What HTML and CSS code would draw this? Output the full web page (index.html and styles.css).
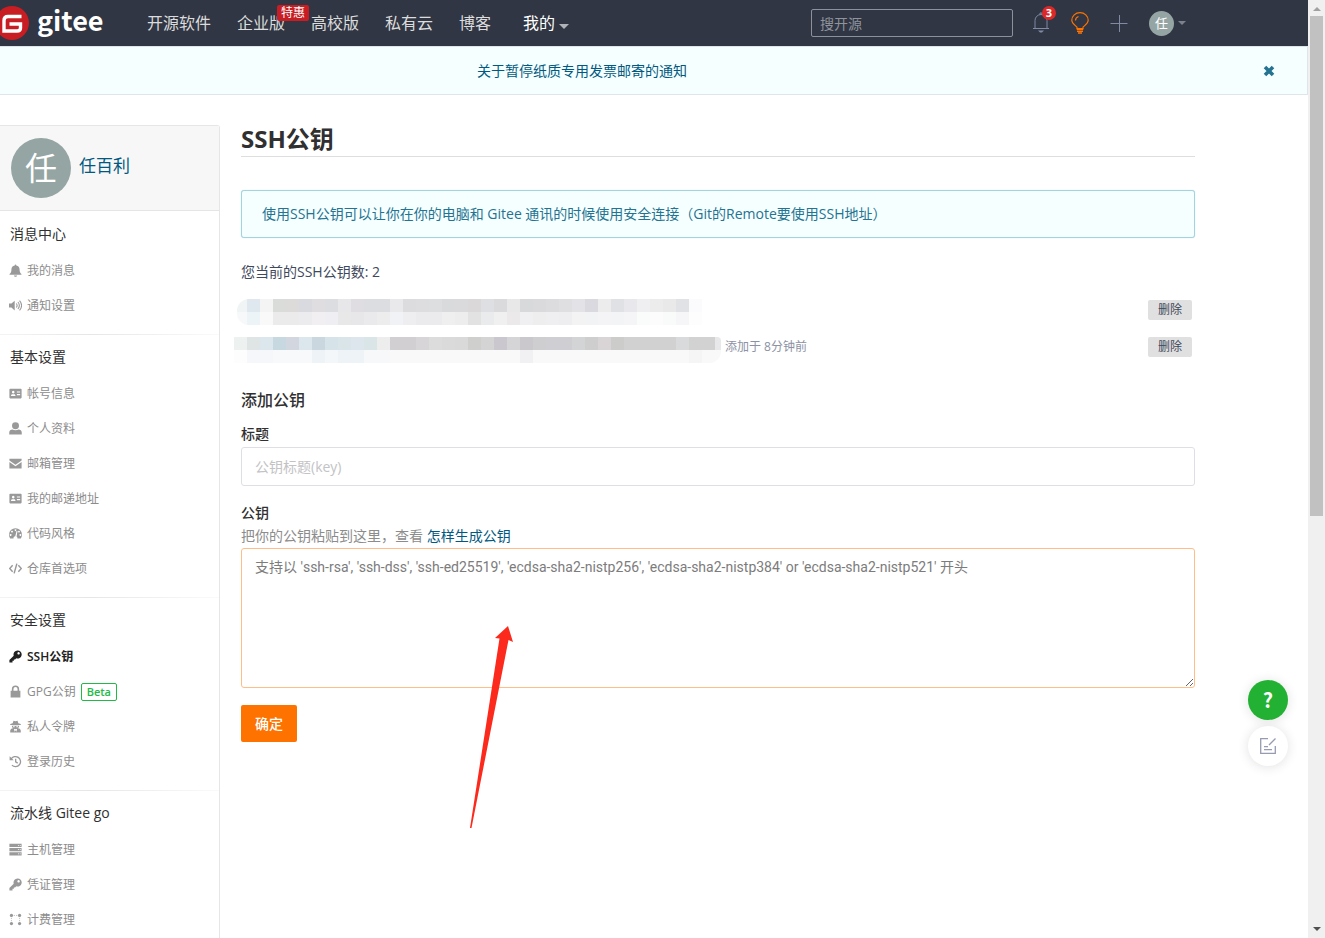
FILE: index.html
```html
<!DOCTYPE html>
<html lang="zh-CN">
<head>
<meta charset="utf-8">
<title>SSH公钥 - Gitee</title>
<link rel="stylesheet" href="styles.css">
</head>
<body>
<svg class="sprite" aria-hidden="true">
  <symbol id="i-bell" viewBox="0 0 16 16"><path d="M8 .7c.6 0 1 .4 1 1 2.500.5 4 2.300 4 4.800 0 3 .8 4.700 2.300 5.700v1H.7v-1C2.200 11.200 3 9.500 3 6.500c0-2.500 1.500-4.300 4-4.800 0-.6.400-1 1-1zM6 14h4c-.2.900-1 1.700-2 1.700S6.200 14.900 6 14z"/></symbol>
  <symbol id="i-sound" viewBox="0 0 16 16"><path d="M0 5.500h3L7 2v12l-4-3.500H0z"/><path d="M9 5.500q2 2.500 0 5M11 3.700q3.500 4.300 0 8.600M13 2q5 6 0 12" fill="none" stroke="currentColor" stroke-width="1.300"/></symbol>
  <symbol id="i-card" viewBox="0 0 16 16"><path fill-rule="evenodd" d="M1.500 2h13q1 0 1 1v10q0 1-1 1h-13q-1 0-1-1V3q0-1 1-1zM5.200 4.700a1.600 1.600 0 1 0 .01 0zM2.500 11h5.500c0-1.700-.8-2.200-1.500-2.200h-2.500c-.8 0-1.500.6-1.500 2.200zM9.700 5.500v1.300h4v-1.300zM9.700 8.700v1.300h4v-1.300z"/></symbol>
  <symbol id="i-user" viewBox="0 0 16 16"><circle cx="8" cy="4.600" r="4.300"/><path d="M.3 15.500v-2.500c0-2.200 1.700-3.700 4-3.700 2 1.200 5.400 1.200 7.400 0 2.300 0 4 1.500 4 3.700v2.500z"/></symbol>
  <symbol id="i-mail" viewBox="0 0 16 16"><path d="M.5 2.200h15v2L8 9.500.5 4.200zM.5 6 8 11.400 15.500 6v8H.5z"/></symbol>
  <symbol id="i-gauge" viewBox="0 0 16 16"><path fill-rule="evenodd" d="M1.500 14A8 8 0 0 1 0 9.500a8 8 0 0 1 16 0A8 8 0 0 1 14.500 14h-4c0-1.200-.5-2-1.200-2.400L10.500 5h-1.200L7.700 11.300c-1.200.1-2.200 1-2.200 2.700zM8 2.700a1.100 1.100 0 1 0 .01 0zM3.700 4.500a1.100 1.100 0 1 0 .01 0zM2 8.700a1.100 1.100 0 1 0 .01 0zM12.300 4.500a1.100 1.100 0 1 0 .01 0zM14 8.700a1.100 1.100 0 1 0 .01 0z"/></symbol>
  <symbol id="i-code" viewBox="0 0 16 16"><path d="M4.500 4 .8 8l3.700 4M11.500 4 15.200 8l-3.700 4M9.700 2 6.300 14" fill="none" stroke="currentColor" stroke-width="1.800"/></symbol>
  <symbol id="i-key" viewBox="0 0 16 16"><path fill-rule="evenodd" d="M10.500.5a5 5 0 1 1-1.600 9.700L7.500 11.600H6v1.700H4.300V15.500H.5v-3.300L5.800 7A5 5 0 0 1 10.500.5zM11.800 2.600a1.500 1.500 0 1 0 .01 0z"/></symbol>
  <symbol id="i-lock" viewBox="0 0 16 16"><path fill-rule="evenodd" d="M2 7h1.500V5a4.500 4.500 0 0 1 9 0v2H14v8.500H2zM5.500 7h5V5a2.500 2.500 0 0 0-5 0z"/></symbol>
  <symbol id="i-spy" viewBox="0 0 16 16"><path fill-rule="evenodd" d="M4.500 4 5.500.8 8 1.500l2.500-.7 1 3.200 3 1v1h-13V5zM3.500 7h9c0 1.500-.7 2.500-1.500 3 2.500.3 3.500 1.500 3.500 3.500v2h-13v-2c0-2 1-3.200 3.500-3.500-.8-.5-1.500-1.500-1.500-3zM5 7.600v1.200h2V7.600zM9 7.600v1.200h2V7.600zM6 10.700l1 3.800 1-2 1 2 1-3.800-2 .8z"/></symbol>
  <symbol id="i-history" viewBox="0 0 16 16"><path d="M2.500 5.200A6.200 6.200 0 1 1 3.600 12.500M8.200 4.500v4l2.500 1.500" fill="none" stroke="currentColor" stroke-width="1.600"/><path d="M.8 1.500v5h5z"/></symbol>
  <symbol id="i-server" viewBox="0 0 16 16"><path fill-rule="evenodd" d="M.5 1h15v4H.5zM.5 6.200h15v4H.5zM.5 11.400h15v4H.5zM11 2.500v1h1.300v-1zM13.200 2.500v1h1.300v-1zM11 7.700v1h1.300v-1zM13.200 7.700v1h1.300v-1zM11 12.900v1h1.300v-1zM13.200 12.900v1h1.300v-1z"/></symbol>
  <symbol id="i-nodes" viewBox="0 0 16 16"><circle cx="3" cy="3" r="2"/><circle cx="13" cy="3" r="2"/><circle cx="3" cy="13" r="2"/><circle cx="13" cy="13" r="2"/><path d="M3 3v10M13 3v10M3 3h10" fill="none" stroke="currentColor" stroke-width="1" stroke-dasharray="1 2"/></symbol>
</svg>

<div class="viewport">
  <div class="page">
    <header class="topbar">
      <a class="logo" href="#">
        <svg viewBox="0 0 30 36" class="logo-mark" aria-hidden="true"><circle cx="12" cy="18" r="17" fill="#c71d23"/><path d="M21.500 11.500H8q-4 0-4 4v10.500h13q3.500 0 3.500-3v-4H9.500" fill="none" stroke="#fff" stroke-width="3.400"/></svg>
        <span class="logo-text">gitee</span>
      </a>
      <nav class="nav">
        <a href="#">开源软件</a>
        <a href="#" class="has-tag">企业版<span class="tag">特惠</span></a>
        <a href="#">高校版</a>
        <a href="#">私有云</a>
        <a href="#">博客</a>
        <a href="#" class="mine">我的<span class="caret"></span></a>
      </nav>
      <input class="search" type="text" placeholder="搜开源" aria-label="搜开源">
      <div class="tools">
        <a href="#" class="tool" aria-label="通知">
          <svg viewBox="0 0 18 22" width="18" height="22" fill="none" stroke="#7f8aa5" stroke-width="1"><path d="M1 16.500h16M3 16.500V8.500a6 6 0 0 1 12 0v8M8 2.500V1h2v1.500"/><path d="M6 18.500h6l-2 2H8z" fill="#7f8aa5" stroke="none"/></svg>
          <span class="count">3</span>
        </a>
        <a href="#" class="tool" aria-label="动态">
          <svg viewBox="0 0 18 22" width="18" height="22" fill="none" stroke="#fe7300" stroke-width="1.200"><path d="M6 16.500v-1.300C3 12.500.8 11 .8 8.300a8.200 7.700 0 0 1 16.400 0c0 2.700-2.200 4.200-5.200 6.900v1.300zM4.500 8.500q0-3 3-4"/><path d="M5.700 17.200h6.600M6 19.200h6M7 21h4" stroke-width="1.400"/></svg>
        </a>
        <a href="#" class="tool" aria-label="新建">
          <svg viewBox="0 0 18 22" width="18" height="22" stroke="#7f8aa5"><path d="M.5 11.500h17M9.500 3v17"/></svg>
        </a>
        <a href="#" class="me"><span class="avatar small">任</span><span class="caret dim"></span></a>
      </div>
    </header>

    <div class="notice">
      <a href="#">关于暂停纸质专用发票邮寄的通知</a>
      <button type="button" class="close" aria-label="关闭"><svg viewBox="0 0 12 12" width="12" height="12"><path d="M2 2l8 8M10 2l-8 8" stroke="#237391" stroke-width="3.600"/></svg></button>
    </div>

    <div class="columns">
      <aside class="side">
        <div class="profile"><span class="avatar">任</span><a href="#">任百利</a></div>
        <section>
          <h2>消息中心</h2>
          <a href="#"><svg><use href="#i-bell"/></svg>我的消息</a>
          <a href="#"><svg><use href="#i-sound"/></svg>通知设置</a>
        </section>
        <section>
          <h2>基本设置</h2>
          <a href="#"><svg><use href="#i-card"/></svg>帐号信息</a>
          <a href="#"><svg><use href="#i-user"/></svg>个人资料</a>
          <a href="#"><svg><use href="#i-mail"/></svg>邮箱管理</a>
          <a href="#"><svg><use href="#i-card"/></svg>我的邮递地址</a>
          <a href="#"><svg><use href="#i-gauge"/></svg>代码风格</a>
          <a href="#"><svg><use href="#i-code"/></svg>仓库首选项</a>
        </section>
        <section>
          <h2>安全设置</h2>
          <a href="#" class="active"><svg><use href="#i-key"/></svg>SSH公钥</a>
          <a href="#"><svg><use href="#i-lock"/></svg>GPG公钥<span class="beta">Beta</span></a>
          <a href="#"><svg><use href="#i-spy"/></svg>私人令牌</a>
          <a href="#"><svg><use href="#i-history"/></svg>登录历史</a>
        </section>
        <section>
          <h2>流水线 Gitee go</h2>
          <a href="#"><svg><use href="#i-server"/></svg>主机管理</a>
          <a href="#"><svg><use href="#i-key"/></svg>凭证管理</a>
          <a href="#"><svg><use href="#i-nodes"/></svg>计费管理</a>
        </section>
      </aside>

      <main class="main">
        <h1>SSH公钥</h1>
        <p class="info">使用SSH公钥可以让你在你的电脑和 Gitee 通讯的时候使用安全连接（Git的Remote要使用SSH地址）</p>
        <p class="total">您当前的SSH公钥数: 2</p>
        <ul class="keys">
          <li><span class="mosaic first"></span><button type="button">删除</button></li>
          <li><span class="mosaic second"></span><span class="when">添加于 8分钟前</span><button type="button">删除</button></li>
        </ul>
        <form class="form">
          <h3>添加公钥</h3>
          <label for="title">标题</label>
          <input id="title" type="text" placeholder="公钥标题(key)">
          <label for="key">公钥</label>
          <p class="help">把你的公钥粘贴到这里，查看 <a href="#">怎样生成公钥</a></p>
          <textarea id="key" placeholder="支持以 'ssh-rsa', 'ssh-dss', 'ssh-ed25519', 'ecdsa-sha2-nistp256', 'ecdsa-sha2-nistp384' or 'ecdsa-sha2-nistp521' 开头"></textarea>
          <button type="submit">确定</button>
        </form>
        <svg class="arrow" viewBox="0 0 46 204" width="46" height="204" aria-hidden="true"><path d="M39 1 44 17 39.500 15 2.500 203H1L30.500 13.500 26 13z" fill="#fc2a1c"/></svg>
      </main>
    </div>

    <div class="float">
      <button type="button" class="ask" aria-label="帮助">?</button>
      <button type="button" class="feedback" aria-label="反馈"><svg viewBox="0 0 16 16" width="16" height="16" fill="none" stroke="#979bb0" stroke-width="1.300"><path d="M8 .7H.7v14.600h14.600V8M15.500.5 9 7M4 8.700h4M4 11.700h8"/></svg></button>
    </div>
  </div>

  <div class="scrollbar" aria-hidden="true"><span class="up"></span><span class="thumb"></span><span class="down"></span></div>
</div>
</body>
</html>
```

FILE: styles.css
```css
* { box-sizing: border-box; }
body {
  margin: 0;
  background: #fff;
  color: #40485b;
  font: 14px/20px "Open Sans", "Noto Sans CJK SC", sans-serif;
}
a { color: #005980; text-decoration: none; }
h1, h2, h3, p, ul { margin: 0; padding: 0; font-weight: 400; }
button, input, textarea { font: inherit; }
.sprite { display: none; }

.viewport { display: grid; grid-template-columns: 1fr 17px; height: 100vh; overflow: hidden; }
.page { position: relative; min-width: 0; overflow: hidden; display: flex; flex-direction: column; }

/* top bar */
.topbar {
  display: flex;
  flex: none;
  align-items: center;
  height: 46px;
  padding-right: 122px;
  background: #303643;
}
.logo { display: flex; align-items: center; width: 147px; gap: 7px; color: #fff; }
.logo-mark { width: 30px; height: 36px; }
.logo-text { font: 700 27px/32px "Noto Sans CJK SC", sans-serif; padding-bottom: 6px; }
.nav { display: flex; gap: 26px; font-size: 16px; }
.nav a { color: #dcdcdc; white-space: nowrap; }
.nav .has-tag { position: relative; }
.nav .mine { color: #fff; margin-left: 6px; }
.tag {
  position: absolute;
  left: 40px;
  top: -8px;
  padding: 0 4px;
  border-radius: 2px;
  background: #c71d23;
  color: #fff;
  font-size: 12px;
  line-height: 16px;
}
.caret {
  display: inline-block;
  margin-left: 4px;
  border: 5px solid transparent;
  border-top-color: #b0b3ba;
  border-bottom: 0;
}
.caret.dim { border-width: 4px 4px 0; border-top-color: #7c818c; }
.search {
  width: 202px;
  height: 28px;
  margin-left: auto;
  padding: 0 8px;
  border: 1px solid #8c919c;
  border-radius: 2px;
  background: transparent;
  color: #fff;
}
.search::placeholder { color: #8f939c; }
.tools { display: flex; align-items: center; gap: 21px; margin-left: 19px; }
.tool { position: relative; height: 22px; }
.tool svg { display: block; }
.count {
  position: absolute;
  left: 10px;
  top: -6px;
  width: 14px;
  height: 14px;
  border-radius: 50%;
  background: #db2828;
  color: #fff;
  font-size: 11px;
  font-weight: 700;
  line-height: 14px;
  text-align: center;
}
.me { display: flex; align-items: center; }
.avatar {
  display: grid;
  place-items: center;
  width: 60px;
  height: 60px;
  border-radius: 50%;
  background: #95a5a4;
  color: #fff;
  font-size: 32px;
  line-height: 40px;
}
.avatar.small { width: 25px; height: 25px; font-size: 13px; line-height: 20px; }

/* notice strip */
.notice {
  display: flex;
  flex: none;
  align-items: center;
  gap: 99px;
  height: 49px;
  padding-right: 32px;
  border: 1px solid #dfe6ea;
  border-left: 0;
  background: #f6ffff;
}
.notice a { flex: 1; text-align: center; }
.close { width: 12px; height: 12px; padding: 0; border: 0; background: none; }
.close svg { display: block; }

/* columns */
.columns { display: flex; flex: 1; gap: 21px; padding: 30px 113px 0 0; }
.side {
  flex: none;
  width: 220px;
  border: 1px solid #e6e6e6;
  border-left: 0;
  border-top-right-radius: 3px;
}
.profile {
  display: flex;
  align-items: center;
  gap: 8px;
  height: 85px;
  margin-bottom: 1px;
  padding-left: 11px;
  border-bottom: 1px solid #e3e6e8;
  background: #f7f7f7;
  font-size: 17px;
}
.profile a { padding-bottom: 4px; }
.side section { padding-bottom: 12px; background: linear-gradient(90deg, #f4f4f4, #e6e6e6 40%, #fafafa) bottom / 100% 1px no-repeat; }
.side section:last-child { background: none; }
.side h2 { height: 41px; padding: 12px 0 0 10px; color: #303030; font-size: 14px; line-height: 20px; }
.side section a {
  display: flex;
  align-items: center;
  height: 35px;
  padding-left: 9px;
  color: #8c8c8c;
  font-size: 12px;
}
.side section svg { width: 13px; height: 13px; margin-right: 5px; fill: currentColor; color: #999; }
.side section .active { color: #212121; font-weight: 600; }
.side section .active svg { color: #212121; }
.beta {
  margin-left: 5px;
  padding: 0 5px;
  border: 1px solid #21ba45;
  border-radius: 2px;
  color: #21ba45;
  font-size: 11px;
  font-weight: 600;
  line-height: 16px;
}

/* main column */
.main { position: relative; flex: 1; min-width: 0; }
.main h1 {
  height: 32px;
  border-bottom: 1px solid #dedede;
  color: #303030;
  font-size: 24px;
  font-weight: 700;
  line-height: 28px;
}
.info {
  margin-top: 33px;
  padding: 13px 20px;
  border: 1px solid #a3d3de;
  border-radius: 3px;
  box-shadow: 0 0 1px #a3d3de;
  background: #f6ffff;
  color: #237391;
}
.total { margin-top: 24px; }
.keys { margin-top: 9px; list-style: none; }
.keys li { display: flex; align-items: center; height: 37px; padding-right: 3px; }
.keys button {
  width: 44px;
  height: 20px;
  margin-left: auto;
  padding: 0;
  border: 0;
  border-radius: 2px;
  background: #e0e0e0;
  color: #40485b;
  font-size: 12px;
  line-height: 20px;
}
.when { margin-left: 4px; color: #8c92a4; font-size: 12px; }
.mosaic { height: 26px; background-repeat: no-repeat; background-size: 100% 13px; background-position: top, bottom; }
.mosaic.first {
  width: 465px;
  margin: 4px 0 0 -4px;
  border-radius: 12px 0 0 12px;
  background-image:
    linear-gradient(90deg, #f0f4f5 0 10px, #dfe8ee 0 23px, #f4f4f4 0 36px, #dadcda 0 49px, #dcdbda 0 62px, #d9dae0 0 75px, #e0dde1 0 88px, #dcdde0 0 101px, #e7e7e9 0 114px, #dfdde2 0 127px, #dcdde0 0 153px, #e9e9eb 0 166px, #dcdcde 0 179px, #dddde0 0 192px, #dddee0 0 205px, #d9dadc 0 218px, #dadadc 0 231px, #dbd8d9 0 244px, #dedfe3 0 257px, #dadadc 0 270px, #e8e8e8 0 283px, #d8d9da 0 296px, #dadadc 0 309px, #dcdcde 0 322px, #dfdfe1 0 335px, #e3e2e6 0 348px, #dad9df 0 361px, #ececec 0 374px, #e0e1e5 0 387px, #e7e7ec 0 400px, #efeff1 0 413px, #ececed 0 426px, #e8e9e8 0 439px, #e1e2e6 0 452px, #fbfbfd 0),
    linear-gradient(90deg, #f6f8fa 0 10px, #edf4f8 0 23px, #f9f9f9 0 36px, #ebebec 0 62px, #ececee 0 75px, #f2eff3 0 88px, #efeff3 0 101px, #e9e8e9 0 114px, #e7e6e9 0 127px, #eaeaec 0 140px, #ededee 0 153px, #f1f2f5 0 166px, #eeeef0 0 179px, #ebebee 0 205px, #efeff0 0 218px, #ededee 0 231px, #e2e2e2 0 244px, #eaebed 0 257px, #f0f0f1 0 270px, #ebe9ea 0 283px, #f0f0f2 0 296px, #eeeeef 0 309px, #efeff1 0 322px, #eeeef0 0 335px, #f3f3f3 0 348px, #f2f3f4 0 361px, #f4f4f6 0 374px, #f3f4f6 0 387px, #f5f5f7 0 400px, #fafcfb 0 413px, #fbfcfb 0 426px, #f9fafa 0 439px, #f6f6f8 0 452px, #fdfdfd 0);
}
.mosaic.second {
  width: 487px;
  margin: 6px 0 0 -7px;
  border-radius: 0 4px 12px 0;
  background-image:
    linear-gradient(90deg, #edf1f0 0 13px, #dfe5e4 0 26px, #dce7ed 0 39px, #c8d8e0 0 52px, #d1d6df 0 65px, #dce7ed 0 78px, #cbd7df 0 91px, #d6e3e8 0 104px, #dae5e9 0 117px, #dee6ed 0 130px, #dae5e7 0 143px, #ededed 0 156px, #d1cfd1 0 182px, #d7d5d8 0 195px, #dcdcdd 0 208px, #dadadb 0 221px, #d9d9da 0 234px, #cfcfce 0 247px, #d5d4d5 0 260px, #cac8ce 0 273px, #d5d4d7 0 286px, #cbc8cd 0 299px, #cecdd0 0 312px, #cfced2 0 338px, #d3d4d6 0 351px, #cfcecf 0 364px, #d9d4d5 0 377px, #cccccb 0 390px, #d1d1d2 0 442px, #d9dadc 0 455px, #d2d2d3 0 481px, #e8e8ea 0),
    linear-gradient(90deg, #fdfdfe 0 13px, #f5f7fa 0 39px, #f7f9fb 0 78px, #edf3f7 0 91px, #f4f7f9 0 104px, #edf3f7 0 130px, #f7f8f9 0 156px, #f9f9fa 0 286px, #f1f1f3 0 299px, #f9f9fa 0 455px, #f5f5f6 0 468px, #f9f9fa 0);
}

.form { display: flex; flex-direction: column; align-items: flex-start; margin-top: 25px; }
.form h3 { color: #303030; font-size: 16px; font-weight: 500; line-height: 20px; margin-bottom: 14px; }
.form label { color: #303030; font-weight: 500; margin-bottom: 3px; }
.form input, .form textarea {
  display: block;
  width: 100%;
  border: 1px solid #dedfe4;
  border-radius: 3px;
  background: #fff;
  outline: 0;
}
.form input { height: 39px; margin-bottom: 17px; padding: 0 13px; }
.form input::placeholder { color: #c3c3c5; }
.form textarea {
  height: 140px;
  padding: 8px 13px;
  border-color: #ffbd87;
  font-family: Roboto, "Noto Sans CJK SC", sans-serif;
  resize: vertical;
}
.form textarea::placeholder { color: #7c7c7c; }
.form .help { color: #8c8c8c; margin-bottom: 2px; }
.form button {
  width: 56px;
  height: 37px;
  margin-top: 17px;
  padding: 0;
  border: 0;
  border-radius: 2px;
  background: #fe7300;
  color: #fff;
  font-weight: 500;
}
.arrow { position: absolute; left: 228px; top: 500px; }

/* floating actions */
.float { position: absolute; right: 20px; bottom: 172px; display: grid; gap: 6px; }
.float button {
  display: grid;
  place-items: center;
  width: 40px;
  height: 40px;
  padding: 0;
  border: 0;
  border-radius: 50%;
  box-shadow: 0 1px 12px rgba(0, 0, 0, .12);
}
.float .ask { background: #22b132; color: #fff; font: 700 20px/24px "Noto Sans CJK SC", sans-serif; }
.float .feedback { background: #fff; }

/* scroll track */
.scrollbar { display: flex; flex-direction: column; align-items: center; padding: 7px 0; background: #f0f0f0; }
.up, .down { border: 4px solid transparent; }
.up { border-top: 0; border-bottom-color: #a0a0a0; }
.down { border-bottom: 0; border-top-color: #505050; margin-top: auto; }
.thumb { width: 13px; height: 500px; margin-top: 5px; background: #c1c1c1; }
```
